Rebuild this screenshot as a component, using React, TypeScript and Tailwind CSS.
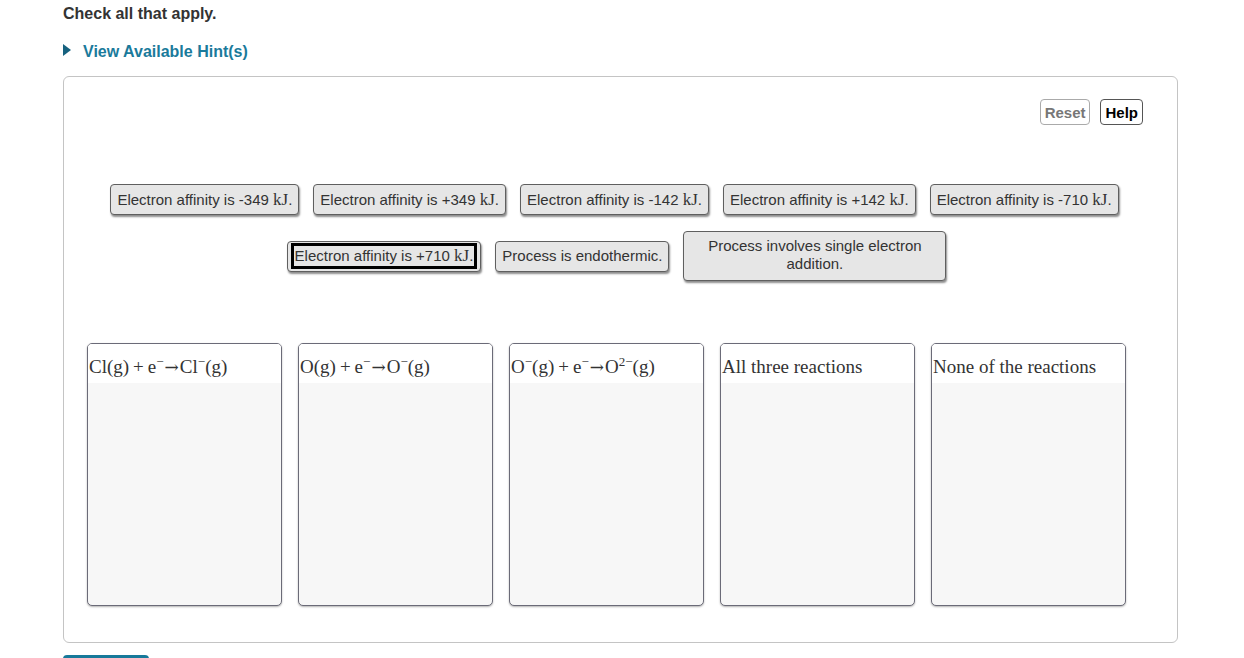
import React from "react";

const sans = { fontFamily: '"Liberation Sans", Arial, sans-serif' };
const serif = { fontFamily: '"Liberation Serif", "Times New Roman", serif' };

function KJ() {
  return (
    <span className="text-[17px]" style={serif}>
      kJ
    </span>
  );
}

function Tile({ children, focused = false, wide = false }: { children: React.ReactNode; focused?: boolean; wide?: boolean }) {
  return (
    <div
      className={
        "rounded-[4px] border border-[#5f5f5f] bg-[#e6e6e6] text-[15px] text-[#333] shadow-[1px_2px_2px_rgba(0,0,0,0.45)] " +
        (wide ? "w-[263px] h-[50px] px-[8px] pt-[5px] text-center leading-[18px]" : "h-[31px] px-[3px] py-[2px] flex items-center")
      }
      style={sans}
    >
      {focused ? (
        <span className="border-[3px] border-black pl-[1px] pr-[1px] h-[26px] flex items-center whitespace-pre">
          <span>{children}</span>
        </span>
      ) : (
        <span className={wide ? "" : "px-[3px] whitespace-nowrap"}>{children}</span>
      )}
    </div>
  );
}

function Zone({ children }: { children: React.ReactNode }) {
  return (
    <div className="w-[195px] h-[263px] rounded-[5px] border border-[#6b6b78] bg-[#f7f7f7] shadow-[0px_1px_2px_rgba(0,0,0,0.3)] overflow-hidden flex flex-col">
      <div className="h-[39px] bg-white pl-[1px] pt-[12px] text-[19px] leading-[22px] text-[#333] whitespace-nowrap" style={serif}>
        {children}
      </div>
    </div>
  );
}

const Sup = ({ children }: { children: React.ReactNode }) => <sup className="text-[13px] top-[-0.55em]">{children}</sup>;
const Arrow = () => (
  <span className="text-[17px] px-[1px]" style={{ fontFamily: '"DejaVu Serif", serif' }}>
    →
  </span>
);
const Plus = () => <span className="px-[4px]">+</span>;

export default function App() {
  return (
    <div className="w-[1244px] h-[658px] bg-white overflow-hidden relative" style={sans}>
      <div className="pl-[63px] pt-[4px]">
        <div className="text-[16px] font-bold text-[#333] leading-[19px]">Check all that apply.</div>
        <div className="mt-[19px] flex items-center h-[19px]">
          <svg width="8" height="12" viewBox="0 0 8 12" className="mr-[12px] -mt-[4px]">
            <path d="M0 0 L8 6 L0 12 Z" fill="#17627f" />
          </svg>
          <span className="text-[16px] font-bold text-[#1a7a9b] leading-[19px]">View Available Hint(s)</span>
        </div>
        <div className="mt-[15px] w-[1115px] h-[567px] rounded-[6px] border border-[#c4c4c4] relative">
          <div className="flex justify-end gap-[10px] pt-[22px] pr-[34px]">
            <button className="h-[26px] px-[4px] rounded-[4px] border border-[#aaa] text-[15px] font-bold text-[#777] leading-none">
              Reset
            </button>
            <button className="h-[26px] px-[4px] rounded-[4px] border border-[#555] text-[15px] font-bold text-black leading-none">
              Help
            </button>
          </div>
          <div className="mt-[59px] flex justify-center gap-[14px] pr-[12px]">
            <Tile>
              Electron affinity is -349 <KJ />.
            </Tile>
            <Tile>
              Electron affinity is +349 <KJ />.
            </Tile>
            <Tile>
              Electron affinity is -142 <KJ />.
            </Tile>
            <Tile>
              Electron affinity is +142 <KJ />.
            </Tile>
            <Tile>
              Electron affinity is -710 <KJ />.
            </Tile>
          </div>
          <div className="mt-[16px] flex justify-center items-center gap-[14px] pr-[8px]">
            <Tile focused>
              Electron affinity is +710 <KJ />.
            </Tile>
            <Tile>Process is endothermic.</Tile>
            <Tile wide>Process involves single electron addition.</Tile>
          </div>
          <div className="mt-[62px] flex gap-[16px] pl-[23px]">
            <Zone>
              Cl(g)
              <Plus />
              e<Sup>−</Sup>
              <Arrow />
              Cl<Sup>−</Sup>(g)
            </Zone>
            <Zone>
              O(g)
              <Plus />
              e<Sup>−</Sup>
              <Arrow />
              O<Sup>−</Sup>(g)
            </Zone>
            <Zone>
              O<Sup>−</Sup>(g)
              <Plus />
              e<Sup>−</Sup>
              <Arrow />
              O<Sup>2−</Sup>(g)
            </Zone>
            <Zone>All three reactions</Zone>
            <Zone>None of the reactions</Zone>
          </div>
        </div>
        <div className="mt-[12px] w-[86px] h-[10px] rounded-t-[4px] bg-[#17799a]" />
      </div>
    </div>
  );
}
